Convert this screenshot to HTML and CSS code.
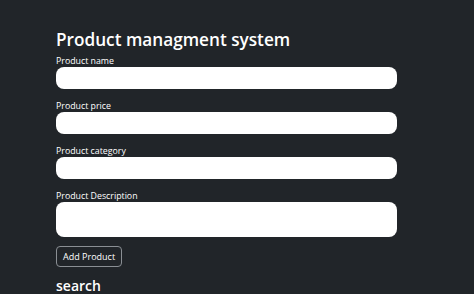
FILE: index.html
```html
<!DOCTYPE html>
<html lang="en">
<head>
    <meta charset="UTF-8">
    <meta name="viewport" content="width=device-width, initial-scale=1.0">
    <title>Product managment system</title>
    <link rel="stylesheet" href="styles.css">
</head>
<body>
    <div class="container">
        <h1>Product managment system</h1>
        <form id="productForm">
            <div class="form-group">
                <label for="name">Product name</label>
                <input type="text" id="name" name="name">
            </div>
            <div class="form-group">
                <label for="price">Product price</label>
                <input type="text" id="price" name="price">
            </div>
            <div class="form-group">
                <label for="category">Product category</label>
                <input type="text" id="category" name="category">
            </div>
            <div class="form-group">
                <label for="description">Product Description</label>
                <textarea id="description" name="description"></textarea>
            </div>
            <button type="submit">Add Product</button>
        </form>
        <h2>search</h2>
    </div>
</body>
</html>
```

FILE: styles.css
```css
:root {
    --background-color: #212529;
    --text-color: #ffffff;
    --input-background: #ffffff;
    --border-color: #8a8f94;
}

* {
    box-sizing: border-box;
    margin: 0;
    padding: 0;
}

body {
    font-family: 'Open Sans', 'Noto Sans', sans-serif;
    background-color: var(--background-color);
    color: var(--text-color);
    overflow: hidden;
}

.container {
    width: 341px;
    margin-left: 56px;
    padding-top: 28px;
}

h1 {
    font-size: 17.2px;
    font-weight: 600;
    line-height: 23px;
    margin-bottom: 4px;
}

.form-group {
    margin-bottom: 11px;
}

.form-group:last-of-type {
    margin-bottom: 9px;
}

label {
    display: block;
    font-size: 8.8px;
    line-height: 12px;
}

input[type="text"],
textarea {
    display: block;
    width: 100%;
    height: 22px;
    border: none;
    border-radius: 8px;
    background-color: var(--input-background);
    resize: none;
}

textarea {
    height: 35px;
}

button {
    display: block;
    height: 21px;
    padding: 0 6px;
    font-family: inherit;
    font-size: 9px;
    color: var(--text-color);
    background: transparent;
    border: 1px solid var(--border-color);
    border-radius: 4px;
}

h2 {
    font-size: 14px;
    font-weight: 600;
    line-height: 18px;
    margin-top: 10px;
}
```
